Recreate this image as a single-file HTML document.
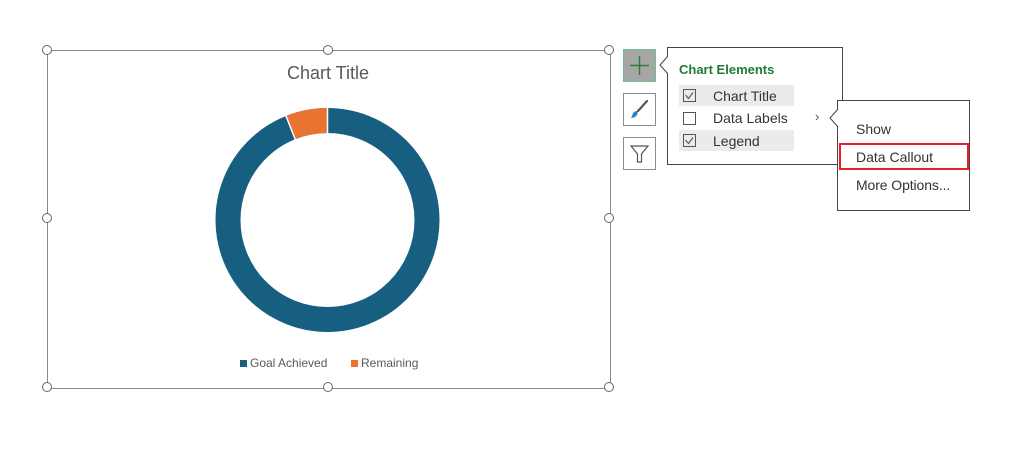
<!DOCTYPE html>
<html><head><style>
body{margin:0;width:1024px;height:455px;background:#fff;position:relative;overflow:hidden;font-family:"Liberation Sans",sans-serif}
.a{position:absolute}
.h{position:absolute;width:8px;height:8px;border:1.5px solid #666;border-radius:50%;background:#fff}
.btn{position:absolute;left:623px;width:31px;height:31px;border:1px solid #8c8c8c;background:#fff}
.it{position:absolute;font-size:14px;color:#333}
.cb{position:absolute;width:11px;height:11px;border:1px solid #555;background:#fff}
</style></head><body>
<div class="a" style="left:47px;top:50px;width:562px;height:337px;border:1px solid #8a8a8a"></div>
<div class="h" style="left:42px;top:45px"></div>
<div class="h" style="left:323px;top:45px"></div>
<div class="h" style="left:604px;top:45px"></div>
<div class="h" style="left:42px;top:213px"></div>
<div class="h" style="left:604px;top:213px"></div>
<div class="h" style="left:42px;top:382px"></div>
<div class="h" style="left:323px;top:382px"></div>
<div class="h" style="left:604px;top:382px"></div>
<div class="a" style="left:228px;top:63px;width:200px;text-align:center;font-size:18px;color:#595959">Chart Title</div>
<svg class="a" style="left:0;top:0" width="1024" height="455">
<circle cx="327.5" cy="220" r="99.5" fill="none" stroke="#175f80" stroke-width="25"/>
<path d="M327.5,120.5 A99.5,99.5 0 0 0 290.5,127.6" fill="none" stroke="#e97432" stroke-width="25"/>
<line x1="327.5" y1="107" x2="327.5" y2="133" stroke="#fff" stroke-width="1.5"/>
<line x1="286" y1="116" x2="295.5" y2="140" stroke="#fff" stroke-width="1.5"/>
<rect x="240" y="360" width="7" height="7" fill="#175f80"/>
<rect x="351" y="360" width="7" height="7" fill="#e97432"/>
</svg>
<div class="a" style="left:250px;top:356px;font-size:12px;color:#595959">Goal Achieved</div>
<div class="a" style="left:361px;top:356px;font-size:12px;color:#595959">Remaining</div>
<div class="btn" style="top:49px;background:#a6a6a6;border-color:#6fbf8a"></div>
<svg class="a" style="left:623px;top:49px" width="33" height="33"><path d="M16.5,7V26M7,16.5H26" stroke="#2e7d3a" stroke-width="1.5"/></svg>
<div class="btn" style="top:93px"></div>
<svg class="a" style="left:623px;top:93px" width="33" height="33"><path d="M24,8 L15,18" stroke="#555" stroke-width="2.2" stroke-linecap="round"/><path d="M9,23 Q10,18 14,18 Q16,21 12,24 Q9,25 8,25Z" fill="#2f7fd0"/></svg>
<div class="btn" style="top:137px"></div>
<svg class="a" style="left:623px;top:137px" width="33" height="33"><path d="M8,9H25L18.5,17V25H14.5V17Z" fill="none" stroke="#555" stroke-width="1.2"/></svg>
<div class="a" style="left:667px;top:47px;width:174px;height:116px;border:1px solid #444;background:#fff"></div>
<svg class="a" style="left:658px;top:55px" width="12" height="22"><path d="M10,1 L2,10 L10,19" fill="#fff" stroke="#444"/><rect x="10" y="0" width="2" height="22" fill="#fff"/></svg>
<div class="a" style="left:679px;top:62px;font-size:13px;font-weight:bold;color:#1f7a3a">Chart Elements</div>
<div class="a" style="left:679px;top:85px;width:115px;height:21px;background:#ebebeb"></div>
<div class="a" style="left:679px;top:130px;width:115px;height:21px;background:#ebebeb"></div>
<div class="cb" style="left:683px;top:89px;background:transparent"></div>
<div class="cb" style="left:683px;top:112px"></div>
<div class="cb" style="left:683px;top:134px;background:transparent"></div>
<svg class="a" style="left:0;top:0" width="1024" height="200">
<path d="M685.5,95 L688.5,98.5 L693,92.5" fill="none" stroke="#555" stroke-width="1.1"/>
<path d="M685.5,140 L688.5,143.5 L693,137.5" fill="none" stroke="#555" stroke-width="1.1"/>
</svg>
<div class="it" style="left:713px;top:88px">Chart Title</div>
<div class="it" style="left:713px;top:110px">Data Labels</div>
<div class="it" style="left:713px;top:133px">Legend</div>
<div class="a" style="left:815px;top:109px;font-size:13px;color:#555">›</div>
<div class="a" style="left:837px;top:100px;width:131px;height:109px;border:1px solid #444;background:#fff"></div>
<svg class="a" style="left:828px;top:108px" width="12" height="22"><path d="M10,1 L2,10 L10,19" fill="#fff" stroke="#444"/><rect x="10" y="0" width="2" height="22" fill="#fff"/></svg>
<div class="a" style="left:839px;top:143px;width:126px;height:23px;border:2.5px solid #e5202a"></div>
<div class="it" style="left:856px;top:121px">Show</div>
<div class="it" style="left:856px;top:149px">Data Callout</div>
<div class="it" style="left:856px;top:177px;letter-spacing:-0.1px">More Options...</div>
</body></html>
